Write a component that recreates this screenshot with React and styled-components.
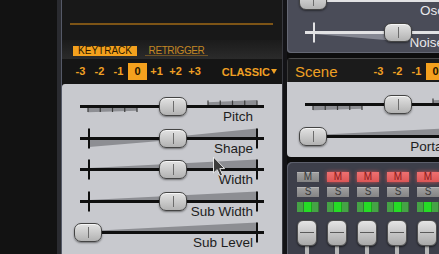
import React from "react";
import styled, { createGlobalStyle } from "styled-components";

const GlobalStyle = createGlobalStyle`
  html, body {
    margin: 0;
    padding: 0;
    background: #0d0d0d;
    overflow: hidden;
  }
  body {
    font-family: "Liberation Sans", Arial, sans-serif;
  }
`;

const ORANGE = "#efa024";

const Screen = styled.div`
  position: relative;
  display: flex;
  width: 439px;
  height: 254px;
  overflow: hidden;
  background: #0d0d0d;
`;

const Gutter = styled.div`
  flex: none;
  width: 57px;
  background: #121212;
  border-right: 4px solid #2a2b30;
`;

const MainColumn = styled.div`
  flex: none;
  width: 220px;
  display: flex;
  flex-direction: column;
  border-left: 1px solid #555967;
`;

const TopArea = styled.div`
  height: 40px;
  background: #181818;
  padding: 23px 9px 0 8px;
  box-sizing: border-box;
`;

const OrangeRule = styled.div`
  height: 2px;
  background: #7d5416;
`;

const TabRow = styled.div`
  height: 20px;
  box-sizing: border-box;
  display: flex;
  align-items: flex-end;
  gap: 8px;
  padding: 0 0 3px 11px;
  background: linear-gradient(#1b1b1b, #2b2b2b);
`;

const Tab = styled.div`
  width: ${(p) => p.$w}px;
  height: 10px;
  box-sizing: border-box;
  font-size: 10px;
  line-height: 10px;
  text-align: center;
  background: ${(p) => (p.$on ? "#f4a11e" : "transparent")};
  color: ${(p) => (p.$on ? "#2a1800" : "#c48824")};
  border-bottom: ${(p) => (p.$on ? "none" : "1px solid #6e5226")};
  letter-spacing: ${(p) => (p.$on ? "0" : "-0.4px")};
`;

const NumRow = styled.div`
  height: 25px;
  display: flex;
  align-items: center;
  padding: 0 5px 0 9px;
  background: #151515;
`;

const Num = styled.div`
  width: 19px;
  height: 17px;
  line-height: 17px;
  text-align: center;
  font-size: 11px;
  font-weight: bold;
  color: ${(p) => (p.$on ? "#241500" : ORANGE)};
  background: ${(p) => (p.$on ? "#f4a11e" : "transparent")};
`;

const Mode = styled.div`
  margin-left: auto;
  display: flex;
  align-items: center;
  font-size: 11px;
  font-weight: bold;
  color: ${ORANGE};

  &::after {
    content: "";
    margin-left: 1px;
    border-left: 3.5px solid transparent;
    border-right: 3.5px solid transparent;
    border-top: 5px solid ${ORANGE};
  }
`;

const LightPanel = styled.div`
  flex: 1;
  display: flex;
  flex-direction: column;
  padding-top: 12px;
  background: #c8c9ce;
  border-top-left-radius: 3px;
`;

const Divider = styled.div`
  flex: none;
  width: 4px;
  background: #131316;
  border-left: 1px solid #38393f;
`;

const RightColumn = styled.div`
  flex: none;
  width: 222px;
  display: flex;
  flex-direction: column;
  gap: 5px;
`;

const DarkPanel = styled.div`
  flex: none;
  height: 53px;
  display: flex;
  flex-direction: column;
  justify-content: flex-end;
  overflow: hidden;
  background: #4a4c58;
  border-radius: 0 0 4px 4px;
  box-shadow: inset 1px -1px 0 #656874;
`;

const ScenePanel = styled.div`
  flex: none;
  height: 99px;
  display: flex;
  flex-direction: column;
  border-radius: 4px;
  overflow: hidden;
`;

const SceneHeader = styled.div`
  height: 27px;
  box-sizing: border-box;
  display: flex;
  align-items: center;
  padding: 2px 0 0 8px;
  background: #1b1b1b;
  box-shadow: inset 0 1px 0 #4a4a4a, inset 1px 0 0 #3a3a3a;
`;

const SceneTitle = styled.div`
  width: 74px;
  font-size: 15px;
  color: ${ORANGE};
`;

const SceneBody = styled.div`
  flex: 1;
  display: flex;
  flex-direction: column;
  padding-top: 12px;
  background: #c8c9ce;
`;

const Mixer = styled.div`
  flex: 1;
  display: flex;
  gap: 8px;
  padding: 10px 0 0 10px;
  background: #3d3f4a;
  border-radius: 5px 5px 0 0;
  box-shadow: inset 1px 1px 0 #5c5f6b;
`;

const Strip = styled.div`
  width: 22px;
  display: flex;
  flex-direction: column;
  gap: 5px;
`;

const ChanButton = styled.div`
  height: 10px;
  font-size: 10px;
  line-height: 10px;
  text-align: center;
  color: ${(p) => (p.$on ? "#8a1717" : "#383838")};
  background: ${(p) =>
    p.$on ? "linear-gradient(#ef7070, #dc5656)" : "linear-gradient(#a2a2a2, #848484)"};
  box-shadow: ${(p) =>
    p.$on ? "0 0 4px rgba(255, 90, 90, 0.75)" : "inset 0 1px 0 #b4b4b4"};
`;

const Meter = styled.div`
  height: 10px;
  display: grid;
  grid-template-columns: 7px 8px 7px;
`;

const Cell = styled.div`
  background: ${(p) => (p.$hot ? "#25dd25" : "#46a246")};
  box-shadow: inset -1px 0 0 rgba(0, 0, 0, 0.25);
`;

const Fader = styled.div`
  margin-top: 3px;
  display: flex;
  flex-direction: column;
  align-items: center;
  width: 20px;
`;

const FaderCap = styled.div`
  position: relative;
  width: 20px;
  height: 26px;
  box-sizing: border-box;
  border-radius: 6px;
  border: 1px solid #505050;
  background: linear-gradient(#e4e4e4, #a9a9a9);
  box-shadow: 0 1px 2px rgba(0, 0, 0, 0.6);

  &::after {
    content: "";
    position: absolute;
    left: 2px;
    right: 2px;
    top: 11px;
    height: 1px;
    background: #5a5a5a;
  }
`;

const FaderStem = styled.div`
  width: 4px;
  height: 20px;
  background: #b9b9b9;
`;

const Row = styled.div`
  position: relative;
  flex: none;
  display: grid;
  height: 32px;

  &:nth-child(even) {
    height: 31px;
  }
`;

const TrackArt = styled.svg`
  grid-area: 1 / 1;
  display: block;
`;

const Label = styled.div`
  grid-area: 1 / 1;
  justify-self: end;
  align-self: start;
  margin: 13px 29px 0 0;
  font-size: 13.5px;
  line-height: 15px;
  white-space: nowrap;
  color: ${(p) => (p.$dark ? "#e9e9ec" : "#1d1d1d")};
`;

const Knob = styled.div`
  position: absolute;
  top: 1px;
  width: 28px;
  height: 19px;
  box-sizing: border-box;
  border: 1px solid #444;
  border-radius: 7px;
  background: linear-gradient(#e2e2e2, #b2b2b2);
  box-shadow: 0 1px 2px rgba(0, 0, 0, 0.45), inset 0 1px 0 rgba(255, 255, 255, 0.7);

  &::after {
    content: "";
    position: absolute;
    left: 13px;
    top: 3px;
    bottom: 3px;
    width: 1px;
    background: #6c6c6c;
  }
`;

const Pointer = styled.svg`
  position: absolute;
  left: 212px;
  top: 156px;
`;

function Slider({ kind, value, label, ends = "both", dark }) {
  const ty = 10.5;
  const wedge = dark ? "#868893" : "#8d8e93";
  const line = dark ? "#e2e2e4" : "#0f0f0f";
  const art = [];

  if (kind === "steps") {
    art.push(<polygon key="l" points="26,12 75,12 75,14.7 26,16.3" fill={wedge} />);
    art.push(<polygon key="r" points="146,9 195,9 195,4 146,6.3" fill={wedge} />);
    [26, 38.25, 50.5, 62.75, 75].forEach((x) =>
      art.push(<rect key={"a" + x} x={x - 0.6} y={12} width={1.2} height={4} fill="#3a3a3a" />)
    );
    [146, 158.25, 170.5, 182.75, 195].forEach((x) =>
      art.push(<rect key={"b" + x} x={x - 0.6} y={4.5} width={1.2} height={4.5} fill="#3a3a3a" />)
    );
  }
  if (kind === "bipolar") {
    art.push(<polygon key="l" points={`27,12 110,12 27,${ty + 8.5}`} fill={wedge} />);
    art.push(<polygon key="r" points="110,9 195,9 195,0.5" fill={wedge} />);
  }
  if (kind === "ramp") {
    art.push(<polygon key="r" points="27,9 195,9 195,0.5" fill={wedge} />);
  }
  if (kind === "under") {
    art.push(<polygon key="u" points="27,12 110,12 110,19" fill={wedge} />);
  }

  return (
    <Row>
      <TrackArt width="220" height="32" viewBox="0 0 220 32">
        {art}
        <rect x="18" y={ty - 1.5} width="184" height="3" fill={line} />
        {(ends === "both" || ends === "left") && (
          <rect x="26" y={ty - 10} width="2" height="20" fill={line} />
        )}
        {(ends === "both" || ends === "right") && (
          <rect x="194" y={ty - 10} width="2" height="20" fill={line} />
        )}
      </TrackArt>
      <Knob style={{ left: 12 + value * 170 }} />
      <Label $dark={dark}>{label}</Label>
    </Row>
  );
}

const steps = ["-3", "-2", "-1", "0", "+1", "+2", "+3"];
const channels = [false, true, true, true, true];

export default function App() {
  return (
    <Screen>
      <GlobalStyle />
      <Gutter />
      <MainColumn>
        <TopArea>
          <OrangeRule />
        </TopArea>
        <TabRow>
          <Tab $on $w={64}>KEYTRACK</Tab>
          <Tab $w={63}>RETRIGGER</Tab>
        </TabRow>
        <NumRow>
          {steps.map((s) => (
            <Num key={s} $on={s === "0"}>{s}</Num>
          ))}
          <Mode>CLASSIC</Mode>
        </NumRow>
        <LightPanel>
          <Slider kind="steps" value={0.5} label="Pitch" ends="none" />
          <Slider kind="bipolar" value={0.5} label="Shape" />
          <Slider kind="ramp" value={0.5} label="Width" />
          <Slider kind="ramp" value={0.5} label="Sub Width" />
          <Slider kind="ramp" value={0} label="Sub Level" ends="right" />
        </LightPanel>
      </MainColumn>
      <Divider />
      <RightColumn>
        <DarkPanel>
          <Slider kind="none" value={0} label="Osc Level" ends="none" dark />
          <Slider kind="under" value={0.5} label="Noise Level" ends="left" dark />
        </DarkPanel>
        <ScenePanel>
          <SceneHeader>
            <SceneTitle>Scene</SceneTitle>
            {steps.map((s) => (
              <Num key={s} $on={s === "0"}>{s}</Num>
            ))}
          </SceneHeader>
          <SceneBody>
            <Slider kind="steps" value={0.5} label="Pitch" ends="none" />
            <Slider kind="ramp" value={0} label="Portamento" ends="right" />
          </SceneBody>
        </ScenePanel>
        <Mixer>
          {channels.map((on, i) => (
            <Strip key={i}>
              <ChanButton $on={on}>M</ChanButton>
              <ChanButton>S</ChanButton>
              <Meter>
                <Cell />
                <Cell $hot />
                <Cell />
              </Meter>
              <Fader>
                <FaderCap />
                <FaderStem />
              </Fader>
            </Strip>
          ))}
        </Mixer>
      </RightColumn>
      <Pointer width="14" height="22" viewBox="0 0 14 22">
        <path
          d="M1.5 1 L1.5 17 L5.2 13.6 L8 20 L10.6 18.9 L7.8 12.6 L12.6 12.6 Z"
          fill="#3c3c3c"
          stroke="#e6e6e6"
          strokeWidth="1"
          strokeLinejoin="round"
        />
      </Pointer>
    </Screen>
  );
}
